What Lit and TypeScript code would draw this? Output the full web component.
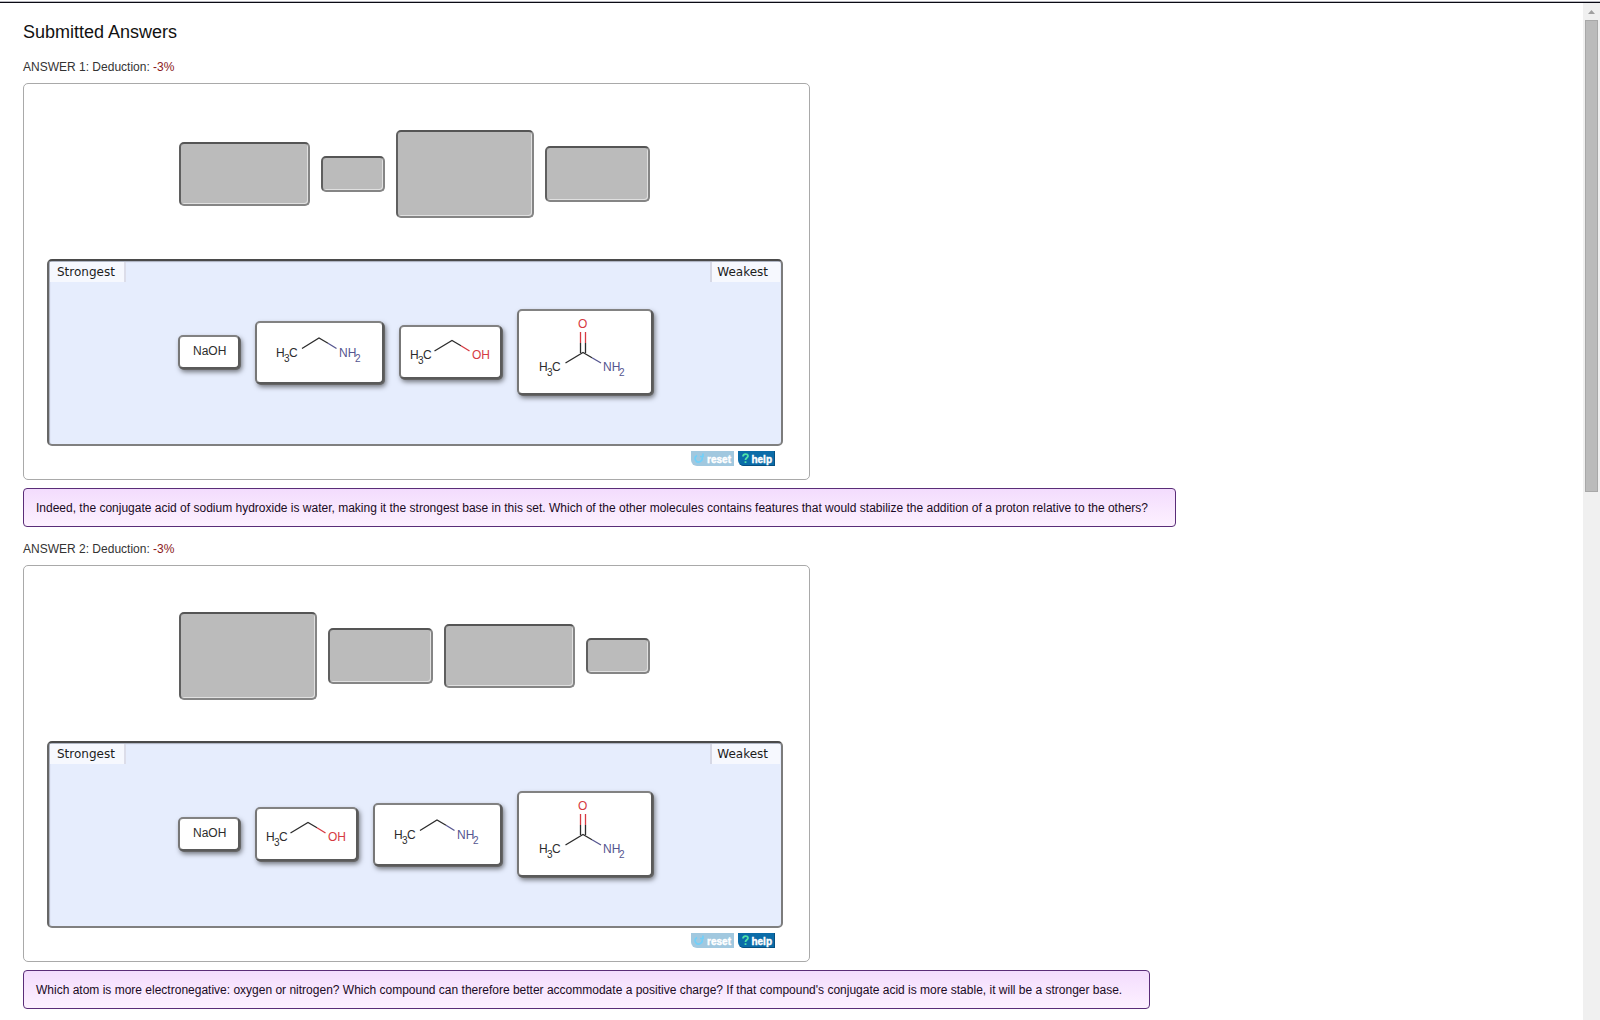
import { LitElement, html, svg, css, nothing } from "lit";
import { customElement, property } from "lit/decorators.js";

type Kind = "naoh" | "amine" | "ethanol" | "amide";

interface Answer {
  number: number;
  deduction: string;
  slots: Kind[];
  order: Kind[];
  feedback: string;
}

const ANSWERS: Answer[] = [
  {
    number: 1,
    deduction: "-3%",
    slots: ["amine", "naoh", "amide", "ethanol"],
    order: ["naoh", "amine", "ethanol", "amide"],
    feedback:
      "Indeed, the conjugate acid of sodium hydroxide is water, making it the strongest base in this set. Which of the other molecules contains features that would stabilize the addition of a proton relative to the others?",
  },
  {
    number: 2,
    deduction: "-3%",
    slots: ["amide", "ethanol", "amine", "naoh"],
    order: ["naoh", "ethanol", "amine", "amide"],
    feedback:
      "Which atom is more electronegative: oxygen or nitrogen? Which compound can therefore better accommodate a positive charge? If that compound's conjugate acid is more stable, it will be a stronger base.",
  },
];

const methyl = (x: number, y: number) => svg`
  <text class="c" x=${x} y=${y}>H</text>
  <text class="c sub" x=${x + 8} y=${y + 5}>3</text>
  <text class="c" x=${x + 13} y=${y}>C</text>`;

const amino = (x: number, y: number) => svg`
  <text class="n" x=${x} y=${y}>NH</text>
  <text class="n sub" x=${x + 16} y=${y + 5}>2</text>`;

@customElement("molecule-figure")
export class MoleculeFigure extends LitElement {
  @property() kind: Kind = "naoh";

  static styles = css`
    :host { display: block; }
    svg { display: block; }
    text { font: 12px "Liberation Sans", Arial, sans-serif; }
    .sub { font-size: 10px; }
    .c { fill: #2c2c2c; }
    .n { fill: #55558f; }
    .o { fill: #d63a42; }
    path { fill: none; stroke-width: 1.3; }
    .bc { stroke: #2c2c2c; }
    .bn { stroke: #55558f; }
    .bo { stroke: #d63a42; }
  `;

  render() {
    switch (this.kind) {
      case "naoh":
        return html`<svg width="58" height="30" viewBox="0 0 58 30" role="img" aria-label="Sodium hydroxide">
          <text class="c" x="13" y="18">NaOH</text>
        </svg>`;
      case "amine":
        return html`<svg width="125" height="59" viewBox="0 0 125 59" role="img" aria-label="Ethylamine">
          ${methyl(19, 34)}
          <path class="bc" d="M45 25.500L62 15L71 20.300" />
          <path class="bn" d="M71 20.300L79.500 25.500" />
          ${amino(82, 34)}
        </svg>`;
      case "ethanol":
        return html`<svg width="99" height="50" viewBox="0 0 99 50" role="img" aria-label="Ethanol">
          ${methyl(9, 32)}
          <path class="bc" d="M33.500 24L51 13.500L60 18.700" />
          <path class="bo" d="M60 18.700L68.500 24" />
          <text class="o" x="71" y="32">OH</text>
        </svg>`;
      case "amide":
        return html`<svg width="132" height="82" viewBox="0 0 132 82" role="img" aria-label="Acetamide">
          <text class="o" x="59" y="17">O</text>
          <path class="bo" d="M61.500 21V32M66.500 21V32" />
          <path class="bc" d="M61.500 32V42M66.500 32V42M46.500 52L64 41.500L73 46.800" />
          <path class="bn" d="M73 46.800L82 52" />
          ${methyl(20, 60)}${amino(84, 60)}
        </svg>`;
    }
    return nothing;
  }
}

@customElement("ranking-board")
export class RankingBoard extends LitElement {
  @property({ attribute: false }) slots: Kind[] = [];
  @property({ attribute: false }) order: Kind[] = [];

  static styles = css`
    :host {
      display: block;
      box-sizing: border-box;
      max-width: 787px;
      padding: 0 26px 13px 23px;
      border: 1px solid #a9a9a9;
      border-radius: 5px;
      background: #fff;
    }
    .slots {
      display: flex;
      align-items: center;
      justify-content: center;
      gap: 11px;
      padding: 46px 2px 41px 0;
    }
    .slot {
      box-sizing: border-box;
      background: #bbb;
      border: 2px solid;
      border-color: #555 #858585 #858585 #5f5f5f;
      border-radius: 5px;
      box-shadow: inset -1px -1px 0 #e0e0e0;
    }
    .slot.naoh { width: 64px; height: 36px; }
    .slot.amine { width: 131px; height: 64px; }
    .slot.ethanol { width: 105px; height: 56px; }
    .slot.amide { width: 138px; height: 88px; }
    .bin {
      box-sizing: border-box;
      height: 187px;
      border: 2px solid;
      border-color: #4a4a4a #7c7c7c #808080 #666;
      border-radius: 5px;
      background: #e6edfd;
      box-shadow: inset 1px 1px 1px #aab0be;
    }
    .ends {
      display: flex;
      justify-content: space-between;
      padding: 1px 1px 0;
      font: 12px/20px "DejaVu Sans", Verdana, sans-serif;
      color: #1c1c1c;
    }
    .end {
      box-sizing: border-box;
      height: 20px;
      background: #f6f8fe;
    }
    .strongest { padding: 0 9px 0 7px; border-right: 2px solid #dcdde9; }
    .weakest { padding: 0 12px 0 5px; border-left: 2px solid #d6d8e5; }
    .tiles {
      display: flex;
      align-items: center;
      justify-content: center;
      gap: 15px;
      height: 140px;
    }
    .tile {
      border: 2px solid;
      border-color: #828282 #5a5a5a #5a5a5a #777;
      border-radius: 5px;
      background: #fff;
      box-shadow: 1px 1px 0 #666, 2px 3px 5px rgba(0, 0, 0, 0.5);
    }
    .actions {
      display: flex;
      justify-content: flex-end;
      gap: 4px;
      padding: 5px 8px 0 0;
    }
    button {
      display: flex;
      align-items: center;
      justify-content: space-between;
      height: 15px;
      margin: 0;
      padding: 0 3px;
      border: 0;
      border-bottom-left-radius: 6px;
      font: bold 10px/12px "Liberation Sans", Arial, sans-serif;
      color: #fff;
      -webkit-text-stroke: 0.4px #fff;
    }
    button span { padding-top: 2px; }
    .reset { width: 43px; background: #a1c8df; }
    .help { width: 37px; background: #0b6ca8; box-shadow: inset -1px -1px 0 #074f80; }
    button svg { display: block; flex: none; }
  `;

  render() {
    return html`
      <div class="slots">
        ${this.slots.map((kind) => html`<div class="slot ${kind}"></div>`)}
      </div>
      <div class="bin">
        <div class="ends">
          <span class="end strongest">Strongest</span>
          <span class="end weakest">Weakest</span>
        </div>
        <div class="tiles">
          ${this.order.map(
            (kind) => html`<div class="tile"><molecule-figure .kind=${kind}></molecule-figure></div>`
          )}
        </div>
      </div>
      <div class="actions">
        <button class="reset" type="button" disabled>
          <svg width="11" height="11" viewBox="0 0 11 11" aria-hidden="true">
            <path d="M3 2.500A3.500 3.500 0 1 0 8 4.500M6 3.500H9V0.500" fill="none" stroke="#6fd0fa" stroke-width="1.600" />
          </svg>
          <span>reset</span>
        </button>
        <button class="help" type="button">
          <svg width="9" height="11" viewBox="0 0 9 11" aria-hidden="true">
            <path d="M2 3.500C2 0.300 7 0.300 7 3C7 4.800 4.500 4.800 4.500 7M4.500 8.200V10" fill="none" stroke="#4fe3a8" stroke-width="1.800" />
          </svg>
          <span>help</span>
        </button>
      </div>
    `;
  }
}

@customElement("app-root")
export class AppRoot extends LitElement {
  static styles = css`
    :host {
      display: flex;
      flex-direction: column;
      box-sizing: border-box;
      height: 100vh;
      overflow: hidden;
      padding-top: 1px;
      background: #fff;
      font: 12px/16px "Liberation Sans", Arial, sans-serif;
      color: #333;
    }
    .rule {
      flex: none;
      height: 1px;
      border-top: 1px solid #b9b9c0;
      background: #0a0a14;
    }
    .body {
      display: flex;
      flex: 1;
      min-height: 0;
    }
    main {
      flex: 1;
      min-width: 0;
      padding: 18px 23px 0;
    }
    h1 {
      margin: 0;
      font-size: 18px;
      line-height: 22px;
      font-weight: 400;
      color: #111;
    }
    h2 {
      margin: 16px 0 8px;
      font-size: 12px;
      line-height: 16px;
      font-weight: 400;
    }
    .answer + .answer h2 { margin-top: 14px; }
    .deduction { color: #8a1a1a; }
    .feedback {
      box-sizing: border-box;
      width: fit-content;
      margin: 8px 0 0;
      padding: 11px 27px 10px 12px;
      border: 1px solid #5a2d78;
      border-radius: 4px;
      background: linear-gradient(#f3dcfd, #fdf1ff);
      color: #1a0a24;
    }
    .scrollbar {
      flex: none;
      width: 17px;
      background: #f0f0f0;
    }
    .arrow { display: block; }
    .thumb {
      box-sizing: border-box;
      height: 46.4%;
      margin: 0 2px;
      border: 1px solid #a8a8a8;
      background: #bbb;
    }
  `;

  render() {
    return html`
      <div class="rule"></div>
      <div class="body">
        <main>
          <h1>Submitted Answers</h1>
          ${ANSWERS.map(
            (a) => html`
              <section class="answer">
                <h2>ANSWER ${a.number}: Deduction: <span class="deduction">${a.deduction}</span></h2>
                <ranking-board .slots=${a.slots} .order=${a.order}></ranking-board>
                <p class="feedback">${a.feedback}</p>
              </section>
            `
          )}
        </main>
        <div class="scrollbar" aria-hidden="true">
          <svg class="arrow" width="17" height="17" viewBox="0 0 17 17">
            <path d="M5 11L8.500 7L12 11Z" fill="#a0a0a0" />
          </svg>
          <div class="thumb"></div>
        </div>
      </div>
    `;
  }
}
